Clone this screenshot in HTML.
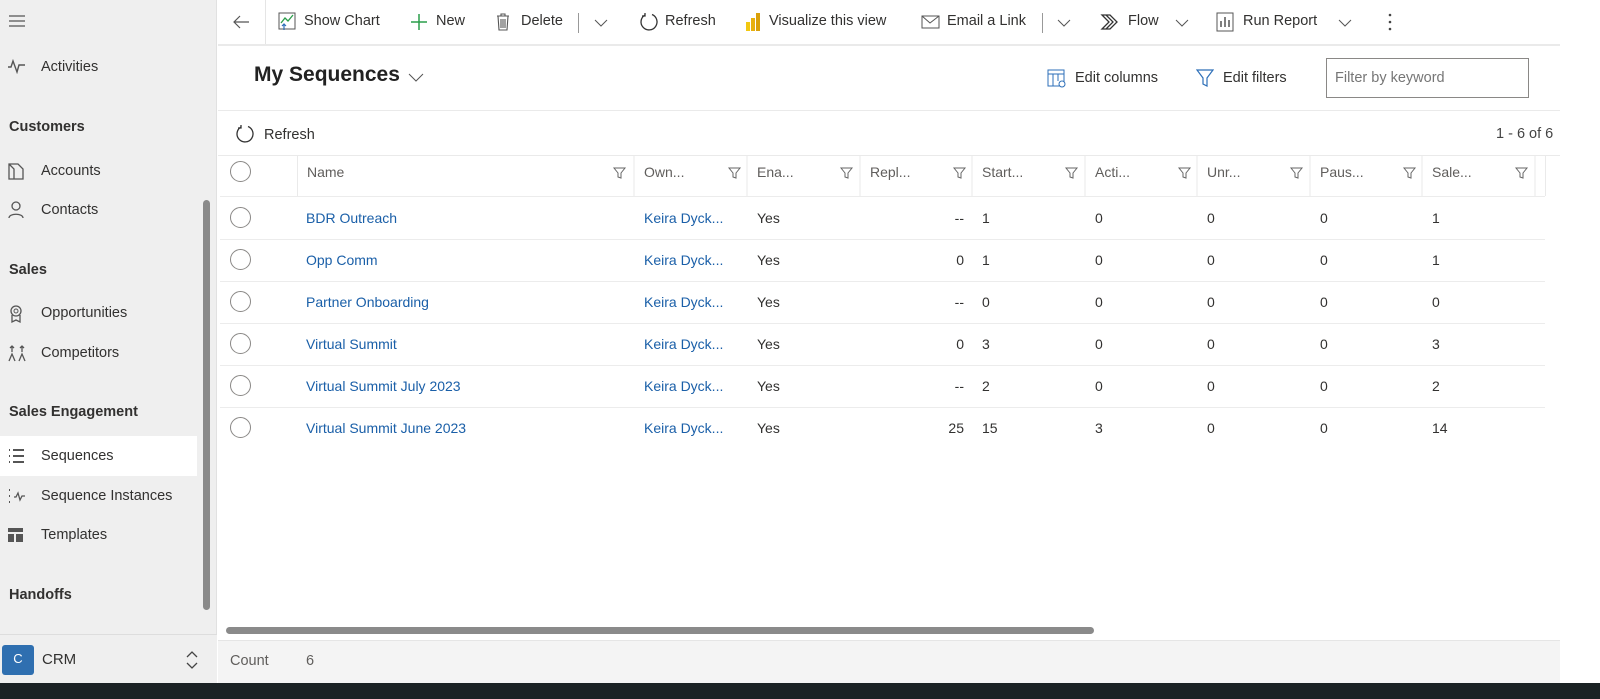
<!DOCTYPE html>
<html><head><meta charset="utf-8"><style>
*{box-sizing:border-box;margin:0;padding:0}
body{width:1600px;height:699px;overflow:hidden;font-family:"Liberation Sans",sans-serif;color:#323130;background:#fff;position:relative;font-size:14px}
.abs{position:absolute}
#side{left:0;top:0;width:217px;height:683px;background:#efefef;border-right:1px solid #e1e1e1}
.ni{position:absolute;left:41px;font-size:14.5px;color:#323130}
.sh{position:absolute;left:9px;font-size:14.5px;font-weight:bold;color:#323130}
.ic{position:absolute;left:7px}
#bar{left:218px;top:0;width:1342px;height:46px;border-bottom:2px solid #eaeaea}
.tb{position:absolute;top:13px;font-size:14.5px;color:#323130}
.hd{position:absolute;top:164px;font-size:14px;color:#605e5c}
.fl{position:absolute;top:166px}
.cell{position:absolute;font-size:14px}
.lnk{color:#1a5fa8}
.rl{position:absolute;left:220px;width:1325px;height:1px;background:#ececec}
.cb{position:absolute;left:230px;width:21px;height:21px;border:1.5px solid #8a8886;border-radius:50%}
</style></head><body>
<div id="side" class="abs">
  <svg class="abs" style="left:8px;top:14px" width="18" height="14"><path d="M1 2h16M1 7h16M1 12h16" stroke="#555" stroke-width="1.3"/></svg>
  <svg class="ic" style="top:58px" width="20" height="16"><path d="M1 9h3l2-6 4 11 2-7h6" stroke="#555" fill="none" stroke-width="1.4"/></svg>
  <div class="ni" style="top:59px">Activities</div>
  <div class="sh" style="top:119px">Customers</div>
  <svg class="ic" style="top:161px" width="18" height="20"><path d="M2 3h9l5 5v10H2zM2 3l5 5v10" stroke="#555" fill="none" stroke-width="1.3"/></svg>
  <div class="ni" style="top:163px">Accounts</div>
  <svg class="ic" style="top:200px" width="18" height="20"><circle cx="9" cy="6" r="4" stroke="#555" fill="none" stroke-width="1.3"/><path d="M2 18c0-5 14-5 14 0" stroke="#555" fill="none" stroke-width="1.3"/></svg>
  <div class="ni" style="top:202px">Contacts</div>
  <div class="sh" style="top:262px">Sales</div>
  <svg class="ic" style="top:304px" width="18" height="20"><circle cx="9" cy="7" r="5" stroke="#555" fill="none" stroke-width="1.3"/><circle cx="9" cy="7" r="2" stroke="#555" fill="none"/><path d="M5 11v7l4-2 4 2v-7" stroke="#555" fill="none" stroke-width="1.3"/></svg>
  <div class="ni" style="top:305px">Opportunities</div>
  <svg class="ic" style="top:344px" width="20" height="18"><path d="M2 17l3-7 3 7M12 17l3-7 3 7M5 8V2M15 8V2M3 4l2-2 2 2M13 4l2-2 2 2" stroke="#555" fill="none" stroke-width="1.3"/></svg>
  <div class="ni" style="top:345px">Competitors</div>
  <div class="sh" style="top:404px">Sales Engagement</div>
  <div class="abs" style="left:0;top:436px;width:197px;height:40px;background:#fff"></div>
  <svg class="ic" style="top:448px" width="18" height="16"><path d="M2 2h1M2 8h1M2 14h1M6 2h11M6 8h11M6 14h11" stroke="#555" stroke-width="2"/></svg>
  <div class="ni" style="top:448px">Sequences</div>
  <svg class="ic" style="top:488px" width="20" height="16"><path d="M2 2h1M2 8h1M2 14h1" stroke="#555" stroke-width="2"/><path d="M7 9h2l2-4 2 7 2-4h3" stroke="#555" fill="none" stroke-width="1.3"/></svg>
  <div class="ni" style="top:488px">Sequence Instances</div>
  <svg class="ic" style="top:527px" width="18" height="16"><rect x="1" y="1" width="15" height="4" fill="#555"/><rect x="1" y="7" width="6" height="8" fill="#555"/><rect x="9" y="7" width="7" height="8" fill="#555"/></svg>
  <div class="ni" style="top:527px">Templates</div>
  <div class="sh" style="top:587px">Handoffs</div>
  <div class="abs" style="left:203px;top:200px;width:7px;height:410px;background:#8a8a8a;border-radius:4px"></div>
  <div class="abs" style="left:0;top:634px;width:217px;height:49px;background:#efefef;border-top:1px solid #ddd"></div>
  <div class="abs" style="left:2px;top:645px;width:32px;height:30px;background:#2f6fb0;border-radius:3px;color:#fff;font-size:13px;text-align:center;line-height:28px">C</div>
  <div class="abs" style="left:42px;top:651px;font-size:15px">CRM</div>
  <svg class="abs" style="left:185px;top:649px" width="14" height="22"><path d="M2 8l5-5 5 5M2 14l5 5 5-5" stroke="#444" fill="none" stroke-width="1.3"/></svg>
</div>

<div id="bar" class="abs">
  <div class="abs" style="left:47px;top:0;width:1px;height:44px;background:#e5e5e5"></div>
  <svg class="abs" style="left:14px;top:13px" width="18" height="18"><path d="M17 9H2M8 3L2 9l6 6" stroke="#555" fill="none" stroke-width="1.2"/></svg>
  <svg class="abs" style="left:60px;top:12px" width="19" height="20"><rect x="1" y="1" width="16" height="16" stroke="#555" fill="none"/><path d="M3 11l4-5 3 3 5-6" stroke="#2a9d4a" fill="none" stroke-width="1.3"/><path d="M6 18v-6M4 14l2-2 2 2" stroke="#2d6fb8" fill="none" stroke-width="1.2"/></svg>
  <div class="tb" style="left:86px">Show Chart</div>
  <svg class="abs" style="left:192px;top:13px" width="18" height="18"><path d="M9 1v16M1 9h16" stroke="#2a9d4a" stroke-width="1.5"/></svg>
  <div class="tb" style="left:218px">New</div>
  <svg class="abs" style="left:278px;top:12px" width="14" height="20"><path d="M1 4h12M5 4V2h4v2M2 4l1 14h8l1-14M5 7v9M7 7v9M9 7v9" stroke="#555" fill="none" stroke-width="1.1"/></svg>
  <div class="tb" style="left:303px">Delete</div>
  <div class="abs" style="left:360px;top:13px;width:1px;height:20px;background:#999"></div>
  <svg class="abs" style="left:376px;top:19px" width="14" height="9"><path d="M1 1l6 6 6-6" stroke="#555" fill="none"/></svg>
  <svg class="abs" style="left:421px;top:12px" width="20" height="20"><path d="M6 3A8 8 0 1 0 13 2.5" stroke="#333" fill="none" stroke-width="1.3"/><path d="M6 1v3H3" stroke="#333" fill="none" stroke-width="1.3"/></svg>
  <div class="tb" style="left:447px">Refresh</div>
  <svg class="abs" style="left:527px;top:12px" width="16" height="20"><rect x="1" y="10" width="4" height="9" fill="#f2c811"/><rect x="6" y="6" width="4" height="13" fill="#e8b00e"/><rect x="11" y="1" width="4" height="18" fill="#d9a00a"/></svg>
  <div class="tb" style="left:551px">Visualize this view</div>
  <svg class="abs" style="left:703px;top:13px" width="20" height="18"><rect x="1" y="3" width="17" height="12" stroke="#555" fill="none"/><path d="M1 3l8 7 9-7" stroke="#555" fill="none"/></svg>
  <div class="tb" style="left:729px">Email a Link</div>
  <div class="abs" style="left:824px;top:13px;width:1px;height:20px;background:#999"></div>
  <svg class="abs" style="left:839px;top:19px" width="14" height="9"><path d="M1 1l6 6 6-6" stroke="#555" fill="none"/></svg>
  <svg class="abs" style="left:882px;top:13px" width="20" height="18"><path d="M2 2h8l7 7-7 7H2l7-7zM6 2l7 7-7 7" stroke="#333" fill="none" stroke-width="1.3"/></svg>
  <div class="tb" style="left:910px">Flow</div>
  <svg class="abs" style="left:957px;top:19px" width="14" height="9"><path d="M1 1l6 6 6-6" stroke="#555" fill="none"/></svg>
  <svg class="abs" style="left:998px;top:12px" width="18" height="20"><rect x="1" y="1" width="16" height="18" stroke="#555" fill="none"/><path d="M5 15V9M9 15V5M13 15V8" stroke="#555" stroke-width="1.5"/></svg>
  <div class="tb" style="left:1025px">Run Report</div>
  <svg class="abs" style="left:1120px;top:19px" width="14" height="9"><path d="M1 1l6 6 6-6" stroke="#555" fill="none"/></svg>
  <svg class="abs" style="left:1170px;top:12px" width="4" height="20"><circle cx="2" cy="3" r="1.3" fill="#444"/><circle cx="2" cy="10" r="1.3" fill="#444"/><circle cx="2" cy="17" r="1.3" fill="#444"/></svg>
</div>

<div class="abs" style="left:254px;top:63px;font-size:21px;font-weight:bold;color:#222">My Sequences</div>
<svg class="abs" style="left:408px;top:73px" width="16" height="10"><path d="M1 1l7 7 7-7" stroke="#555" fill="none"/></svg>
<svg class="abs" style="left:1047px;top:69px" width="20" height="20"><rect x="1" y="1" width="16" height="16" stroke="#2d6fb8" fill="none"/><path d="M1 5h16M6 5v12M11 5v7" stroke="#2d6fb8"/><circle cx="15" cy="15" r="3" fill="#fff" stroke="#2d6fb8"/></svg>
<div class="abs" style="left:1075px;top:70px;font-size:14.5px">Edit columns</div>
<svg class="abs" style="left:1196px;top:68px" width="18" height="20"><path d="M1 2h16l-6 8v8l-4-2v-6z" stroke="#2d6fb8" fill="none" stroke-width="1.2"/></svg>
<div class="abs" style="left:1223px;top:70px;font-size:14.5px">Edit filters</div>
<div class="abs" style="left:1326px;top:58px;width:203px;height:40px;border:1px solid #8a8886;padding:11px 8px;font-size:14.5px;color:#767676">Filter by keyword</div>

<div class="abs" style="left:218px;top:110px;width:1342px;height:1px;background:#eaeaea"></div>
<svg class="abs" style="left:235px;top:124px" width="20" height="20"><path d="M6 3A8 8 0 1 0 13 2.5" stroke="#333" fill="none" stroke-width="1.3"/><path d="M6 1v3H3" stroke="#333" fill="none" stroke-width="1.3"/></svg>
<div class="abs" style="left:264px;top:127px;font-size:14.5px">Refresh</div>
<div class="abs" style="left:1496px;top:126px;font-size:14.5px;color:#444">1 - 6 of 6</div>
<div class="abs" style="left:218px;top:155px;width:1342px;height:1px;background:#eaeaea"></div>

<div class="cb" style="top:161px"></div>
<div class="abs" style="left:297px;top:156px;width:1px;height:40px;background:#eaeaea"></div>
<div class="abs" style="left:1545px;top:156px;width:1px;height:40px;background:#eaeaea"></div>
<div class="hd" style="left:307px">Name</div>
<div class="hd" style="left:644px">Own...</div>
<div class="hd" style="left:757px">Ena...</div>
<div class="hd" style="left:870px">Repl...</div>
<div class="hd" style="left:982px">Start...</div>
<div class="hd" style="left:1095px">Acti...</div>
<div class="hd" style="left:1207px">Unr...</div>
<div class="hd" style="left:1320px">Paus...</div>
<div class="hd" style="left:1432px">Sale...</div>
<div id="flt"></div>
<svg class="abs" style="left:0;top:0;pointer-events:none" width="1600" height="699">
<g stroke="#666" fill="none" stroke-width="1">
<path d="M614 168h11l-4 5v5l-3-1v-4z"/><path d="M729 168h11l-4 5v5l-3-1v-4z"/><path d="M841 168h11l-4 5v5l-3-1v-4z"/><path d="M954 168h11l-4 5v5l-3-1v-4z"/><path d="M1066 168h11l-4 5v5l-3-1v-4z"/><path d="M1179 168h11l-4 5v5l-3-1v-4z"/><path d="M1291 168h11l-4 5v5l-3-1v-4z"/><path d="M1404 168h11l-4 5v5l-3-1v-4z"/><path d="M1516 168h11l-4 5v5l-3-1v-4z"/>
</g>
<g stroke="#eaeaea"><path d="M634 156v40M747 156v40M860 156v40M972 156v40M1085 156v40M1197 156v40M1310 156v40M1422 156v40M1535 156v40"/></g>
</svg>
<div class="rl" style="top:196px"></div>
<div class="rl" style="top:239px"></div>
<div class="rl" style="top:281px"></div>
<div class="rl" style="top:323px"></div>
<div class="rl" style="top:365px"></div>
<div class="rl" style="top:407px"></div>

<div class="cb" style="top:207px"></div><div class="cb" style="top:249px"></div><div class="cb" style="top:291px"></div><div class="cb" style="top:333px"></div><div class="cb" style="top:375px"></div><div class="cb" style="top:417px"></div>

<div class="cell lnk" style="left:306px;top:210px">BDR Outreach</div>
<div class="cell lnk" style="left:306px;top:252px">Opp Comm</div>
<div class="cell lnk" style="left:306px;top:294px">Partner Onboarding</div>
<div class="cell lnk" style="left:306px;top:336px">Virtual Summit</div>
<div class="cell lnk" style="left:306px;top:378px">Virtual Summit July 2023</div>
<div class="cell lnk" style="left:306px;top:420px">Virtual Summit June 2023</div>

<div class="cell lnk" style="left:644px;top:210px">Keira Dyck...</div>
<div class="cell lnk" style="left:644px;top:252px">Keira Dyck...</div>
<div class="cell lnk" style="left:644px;top:294px">Keira Dyck...</div>
<div class="cell lnk" style="left:644px;top:336px">Keira Dyck...</div>
<div class="cell lnk" style="left:644px;top:378px">Keira Dyck...</div>
<div class="cell lnk" style="left:644px;top:420px">Keira Dyck...</div>

<div class="cell" style="left:757px;top:210px">Yes</div><div class="cell" style="left:757px;top:252px">Yes</div><div class="cell" style="left:757px;top:294px">Yes</div><div class="cell" style="left:757px;top:336px">Yes</div><div class="cell" style="left:757px;top:378px">Yes</div><div class="cell" style="left:757px;top:420px">Yes</div>

<div class="cell" style="right:636px;top:210px">--</div><div class="cell" style="right:636px;top:252px">0</div><div class="cell" style="right:636px;top:294px">--</div><div class="cell" style="right:636px;top:336px">0</div><div class="cell" style="right:636px;top:378px">--</div><div class="cell" style="right:636px;top:420px">25</div>

<div class="cell" style="left:982px;top:210px">1</div><div class="cell" style="left:982px;top:252px">1</div><div class="cell" style="left:982px;top:294px">0</div><div class="cell" style="left:982px;top:336px">3</div><div class="cell" style="left:982px;top:378px">2</div><div class="cell" style="left:982px;top:420px">15</div>

<div class="cell" style="left:1095px;top:210px">0</div><div class="cell" style="left:1095px;top:252px">0</div><div class="cell" style="left:1095px;top:294px">0</div><div class="cell" style="left:1095px;top:336px">0</div><div class="cell" style="left:1095px;top:378px">0</div><div class="cell" style="left:1095px;top:420px">3</div>

<div class="cell" style="left:1207px;top:210px">0</div><div class="cell" style="left:1207px;top:252px">0</div><div class="cell" style="left:1207px;top:294px">0</div><div class="cell" style="left:1207px;top:336px">0</div><div class="cell" style="left:1207px;top:378px">0</div><div class="cell" style="left:1207px;top:420px">0</div>

<div class="cell" style="left:1320px;top:210px">0</div><div class="cell" style="left:1320px;top:252px">0</div><div class="cell" style="left:1320px;top:294px">0</div><div class="cell" style="left:1320px;top:336px">0</div><div class="cell" style="left:1320px;top:378px">0</div><div class="cell" style="left:1320px;top:420px">0</div>

<div class="cell" style="left:1432px;top:210px">1</div><div class="cell" style="left:1432px;top:252px">1</div><div class="cell" style="left:1432px;top:294px">0</div><div class="cell" style="left:1432px;top:336px">3</div><div class="cell" style="left:1432px;top:378px">2</div><div class="cell" style="left:1432px;top:420px">14</div>

<div class="abs" style="left:226px;top:627px;width:868px;height:7px;background:#8a8a8a;border-radius:4px"></div>
<div class="abs" style="left:218px;top:640px;width:1342px;height:43px;background:#f4f4f4;border-top:1px solid #e5e5e5"></div>
<div class="abs" style="left:230px;top:653px;font-size:14.5px;color:#605e5c">Count</div>
<div class="abs" style="left:306px;top:653px;font-size:14.5px;color:#605e5c">6</div>
<div class="abs" style="left:0;top:683px;width:1600px;height:16px;background:#1b2224"></div>
</body></html>
